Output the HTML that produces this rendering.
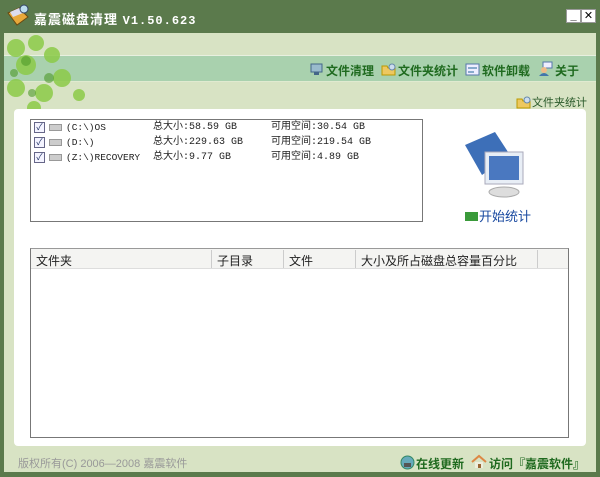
<!DOCTYPE html>
<html><head><meta charset="utf-8"><style>
*{margin:0;padding:0;box-sizing:border-box}
body{width:600px;height:477px;overflow:hidden;background:#5b7a4c;font-family:"Liberation Sans","Noto Sans CJK SC",sans-serif;font-size:12px;position:relative}
.a{position:absolute;white-space:nowrap}
.mono{font-family:"Liberation Mono","Noto Sans CJK SC",monospace;font-size:10px;line-height:15px;color:#222}
.tb{font-weight:bold;color:#1f6a1f;font-size:12px;top:62px}
.cb{position:absolute;left:34px;width:11px;height:11px;border:1px solid #668;background:#f4f4ff;font-size:9px;line-height:9px;text-align:center;color:#236}
.dr{position:absolute;left:49px;width:13px;height:7px;background:#ccc;border:1px solid #999}
</style></head><body>
<div class="a" style="left:0;top:0;width:600px;height:33px;background:#5b7a4c"></div>
<svg class="a" style="left:5px;top:3px" width="26" height="26"><path d="M3 10 L14 5 L23 14 L12 22 Z" fill="#e8a83a" stroke="#6a4a10"/><path d="M5 9 L14 5 L18 10 L8 14Z" fill="#dde"/><circle cx="19" cy="6" r="4" fill="#bde" stroke="#346"/></svg>
<div class="a" style="left:34px;top:9px;color:#fff;font-weight:bold;font-size:13px;letter-spacing:1px">嘉震磁盘清理 <span style="font-family:'Liberation Mono',monospace;font-size:12px">V1.50.623</span></div>
<div class="a" style="left:566px;top:9px;width:15px;height:14px;background:#fff;border:1px solid #999;font-size:11px;text-align:center;line-height:12px;font-weight:bold">_</div>
<div class="a" style="left:581px;top:9px;width:15px;height:14px;background:#fff;border:1px solid #999;font-size:11px;text-align:center;line-height:12px">✕</div>
<div class="a" style="left:4px;top:33px;width:592px;height:439px;background:#d8e3c4"></div>
<div class="a" style="left:4px;top:55px;width:592px;height:27px;background:#a9d1ae;border-top:1px solid #e8f0e0;border-bottom:1px solid #e0ead0"></div>
<svg class="a" style="left:4px;top:33px" width="110" height="80"><g fill="#8ccb48" opacity=".85"><circle cx="12" cy="15" r="9"/><circle cx="32" cy="10" r="8"/><circle cx="22" cy="32" r="10"/><circle cx="48" cy="22" r="8"/><circle cx="58" cy="45" r="9"/><circle cx="40" cy="60" r="9"/><circle cx="12" cy="55" r="9"/><circle cx="30" cy="75" r="7"/><circle cx="75" cy="62" r="6"/></g><g fill="#4f9a2a" opacity=".6"><circle cx="22" cy="28" r="5"/><circle cx="45" cy="45" r="5"/><circle cx="10" cy="40" r="4"/><circle cx="28" cy="60" r="4"/></g></svg>
<svg class="a" style="left:310px;top:62px" width="14" height="14"><rect x="1" y="2" width="11" height="8" fill="#9bc" stroke="#468"/><rect x="4" y="10" width="5" height="3" fill="#468"/></svg>
<div class="a tb" style="left:326px">文件清理</div>
<svg class="a" style="left:381px;top:62px" width="15" height="14"><path d="M1 4h5l1 2h7v7H1z" fill="#edc860" stroke="#b90"/><circle cx="11" cy="5" r="3" fill="#cde" stroke="#68a"/></svg>
<div class="a tb" style="left:398px">文件夹统计</div>
<svg class="a" style="left:465px;top:62px" width="15" height="14"><rect x="1" y="2" width="13" height="11" fill="#eef" stroke="#57a"/><rect x="3" y="5" width="9" height="2" fill="#8ac"/><rect x="3" y="9" width="6" height="2" fill="#8ac"/></svg>
<div class="a tb" style="left:482px">软件卸载</div>
<svg class="a" style="left:538px;top:61px" width="15" height="16"><rect x="5" y="1" width="9" height="6" fill="#eef" stroke="#57a"/><circle cx="6" cy="9" r="3" fill="#eb8"/><path d="M1 15 q5 -6 10 0z" fill="#47a"/></svg>
<div class="a tb" style="left:555px">关于</div>
<svg class="a" style="left:516px;top:95px" width="15" height="14"><path d="M1 4h5l1 2h7v7H1z" fill="#edc860" stroke="#b90"/><circle cx="11" cy="5" r="3" fill="#cde" stroke="#68a"/></svg>
<div class="a" style="left:532px;top:94px;color:#2a5a2a;font-size:11px">文件夹统计</div>
<div class="a" style="left:14px;top:109px;width:572px;height:337px;background:#fff;border-radius:4px"></div>
<div class="a" style="left:30px;top:119px;width:393px;height:103px;border:1px solid #777;background:#fff"></div>
<div class="cb" style="top:122px">✓</div><div class="dr" style="top:124px"></div>
<div class="cb" style="top:137px">✓</div><div class="dr" style="top:139px"></div>
<div class="cb" style="top:152px">✓</div><div class="dr" style="top:154px"></div>
<div class="a mono" style="left:66px;top:120px;font-size:9.5px"><div>(C:\)OS</div><div>(D:\)</div><div>(Z:\)RECOVERY</div></div>
<div class="a mono" style="left:153px;top:120px"><div>总大小:58.59 GB</div><div>总大小:229.63 GB</div><div>总大小:9.77 GB</div></div>
<div class="a mono" style="left:271px;top:120px"><div>可用空间:30.54 GB</div><div>可用空间:219.54 GB</div><div>可用空间:4.89 GB</div></div>
<svg class="a" style="left:460px;top:130px" width="70" height="70"><path d="M5 15 L35 2 L50 25 L22 45 Z" fill="#3d6fb8"/><rect x="25" y="22" width="38" height="32" fill="#e8eef6" stroke="#aab"/><rect x="29" y="26" width="30" height="24" fill="#4a78c0"/><ellipse cx="44" cy="62" rx="15" ry="5" fill="#ddd" stroke="#aaa"/></svg>
<div class="a" style="left:465px;top:206px;color:#1a4aa0;font-size:13px"><span style="display:inline-block;width:13px;height:9px;background:#3a9a3a;margin-right:1px"></span>开始统计</div>
<div class="a" style="left:30px;top:248px;width:539px;height:190px;border:1px solid #777;border-top:1px solid #999;background:#fff"></div>
<div class="a" style="left:31px;top:249px;width:537px;height:20px;background:#f4f4f2;border-bottom:1px solid #ddd"></div>
<div class="a" style="left:36px;top:252px;color:#222">文件夹</div>
<div class="a" style="left:211px;top:250px;width:1px;height:18px;background:#ccc"></div>
<div class="a" style="left:217px;top:252px;color:#222">子目录</div>
<div class="a" style="left:283px;top:250px;width:1px;height:18px;background:#ccc"></div>
<div class="a" style="left:289px;top:252px;color:#222">文件</div>
<div class="a" style="left:355px;top:250px;width:1px;height:18px;background:#ccc"></div>
<div class="a" style="left:361px;top:252px;color:#222">大小及所占磁盘总容量百分比</div>
<div class="a" style="left:537px;top:250px;width:1px;height:18px;background:#ccc"></div>
<div class="a" style="left:18px;top:455px;color:#999;font-size:11px">版权所有(C) 2006—2008 嘉震软件</div>
<svg class="a" style="left:400px;top:455px" width="15" height="15"><circle cx="7.5" cy="7.5" r="6.5" fill="#6ab" stroke="#386"/><rect x="4" y="8" width="7" height="4" fill="#555"/></svg>
<div class="a" style="left:416px;top:455px;color:#1f6a1f;font-weight:bold">在线更新</div>
<svg class="a" style="left:471px;top:454px" width="16" height="15"><path d="M1 8 L8 2 L15 8" fill="none" stroke="#d84" stroke-width="2"/><rect x="4" y="8" width="8" height="6" fill="#eed"/><rect x="7" y="10" width="3" height="4" fill="#963"/></svg>
<div class="a" style="left:489px;top:455px;color:#1f6a1f;font-weight:bold">访问『嘉震软件』</div>
</body></html>
